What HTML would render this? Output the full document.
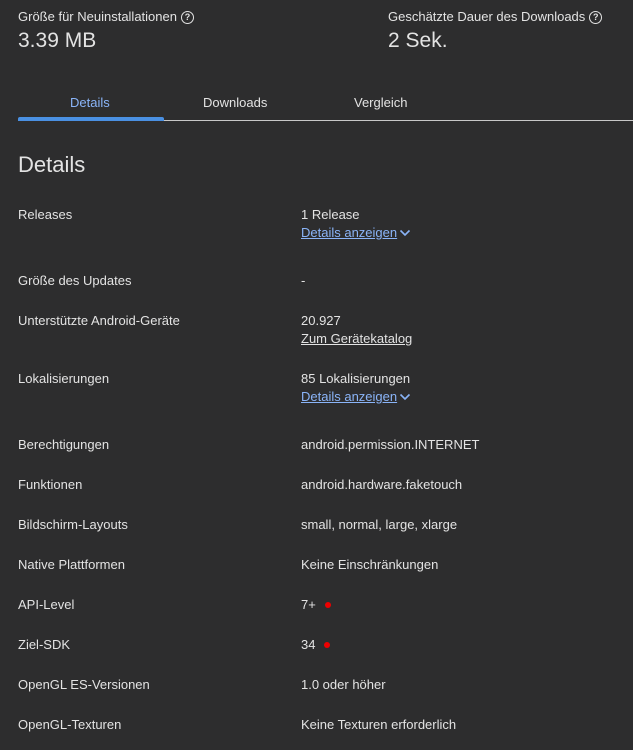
<html><head><style>
body{margin:0;width:633px;height:750px;background:#2d2d2e;color:#e3e3e3;font-family:"Liberation Sans",sans-serif;overflow:hidden;position:relative}
.a{position:absolute;white-space:nowrap}
.l{font-size:13px;left:18px}
.v{font-size:13px;left:301px}
.lk{color:#8ab4f8;text-decoration:underline}
.u{text-decoration:underline}
.q{display:inline-block;width:11px;height:11px;border:1.3px solid #e3e3e3;border-radius:50%;font-size:9px;line-height:11px;text-align:center;vertical-align:1px;margin-left:4px;font-weight:bold}
.dot{display:inline-block;width:6px;height:6px;background:#e00;border-radius:50%;margin-left:9px;vertical-align:1px}
</style></head><body>
<div class="a" style="left:18px;top:9px;font-size:13px">Größe für Neuinstallationen<span class="q">?</span></div>
<div class="a" style="left:18px;top:29px;font-size:21px">3.39 MB</div>
<div class="a" style="left:388px;top:9px;font-size:13px">Geschätzte Dauer des Downloads<span class="q">?</span></div>
<div class="a" style="left:388px;top:29px;font-size:21px">2 Sek.</div>
<div class="a" style="left:70px;top:95px;font-size:13px;color:#8ab4f8">Details</div>
<div class="a" style="left:203px;top:95px;font-size:13px">Downloads</div>
<div class="a" style="left:354px;top:95px;font-size:13px">Vergleich</div>
<div class="a" style="left:18px;top:120px;width:615px;height:1px;background:#c8c8c8"></div>
<div class="a" style="left:18px;top:117px;width:146px;height:4px;background:#4a90e2;border-radius:2px 2px 0 0"></div>
<div class="a" style="left:18px;top:152px;font-size:22px">Details</div>
<div class="a l" style="top:207px">Releases</div><div class="a v" style="top:207px">1 Release</div>
<div class="a v lk" style="top:225px">Details anzeigen</div>
<svg class="a" style="left:399px;top:228px" width="12" height="10" viewBox="0 0 12 10"><path d="M1.5 2.5 L6 7 L10.5 2.5" fill="none" stroke="#8ab4f8" stroke-width="1.6"/></svg>
<div class="a l" style="top:273px">Größe des Updates</div><div class="a v" style="top:273px">-</div>
<div class="a l" style="top:313px">Unterstützte Android-Geräte</div><div class="a v" style="top:313px">20.927</div>
<div class="a v u" style="top:331px">Zum Gerätekatalog</div>
<div class="a l" style="top:371px">Lokalisierungen</div><div class="a v" style="top:371px">85 Lokalisierungen</div>
<div class="a v lk" style="top:389px">Details anzeigen</div>
<svg class="a" style="left:399px;top:392px" width="12" height="10" viewBox="0 0 12 10"><path d="M1.5 2.5 L6 7 L10.5 2.5" fill="none" stroke="#8ab4f8" stroke-width="1.6"/></svg>
<div class="a l" style="top:437px">Berechtigungen</div><div class="a v" style="top:437px">android.permission.INTERNET</div>
<div class="a l" style="top:477px">Funktionen</div><div class="a v" style="top:477px">android.hardware.faketouch</div>
<div class="a l" style="top:517px">Bildschirm-Layouts</div><div class="a v" style="top:517px">small, normal, large, xlarge</div>
<div class="a l" style="top:557px">Native Plattformen</div><div class="a v" style="top:557px">Keine Einschränkungen</div>
<div class="a l" style="top:597px">API-Level</div><div class="a v" style="top:597px">7+<span class="dot"></span></div>
<div class="a l" style="top:637px">Ziel-SDK</div><div class="a v" style="top:637px">34<span class="dot"></span></div>
<div class="a l" style="top:677px">OpenGL ES-Versionen</div><div class="a v" style="top:677px">1.0 oder höher</div>
<div class="a l" style="top:717px">OpenGL-Texturen</div><div class="a v" style="top:717px">Keine Texturen erforderlich</div>
</body></html>
